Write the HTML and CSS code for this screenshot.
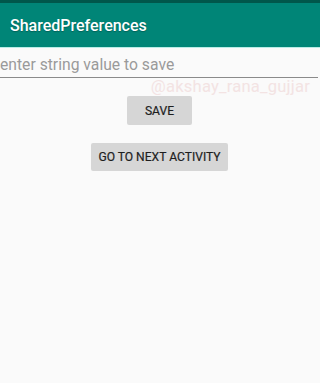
FILE: index.html
```html
<!DOCTYPE html>
<html>
<head>
<meta charset="utf-8">
<link rel="stylesheet" href="styles.css">
</head>
<body>
<div class="status"></div>
<div class="appbar"><span class="title">SharedPreferences</span></div>
<div class="content">
  <div class="field"><span class="hint">enter string value to save</span></div>
  <div class="watermark">@akshay_rana_gujjar</div>
  <div class="buttons">
    <div class="btn save">SAVE</div>
    <div class="btn next">GO TO NEXT ACTIVITY</div>
  </div>
</div>
</body>
</html>
```
FILE: styles.css
```css
html, body {
  margin: 0;
  padding: 0;
  background: #fafafa;
  font-family: Roboto, "Noto Sans", sans-serif;
  width: 320px;
  height: 383px;
  overflow: hidden;
}
.status {
  height: 3px;
  background: #00574b;
}
.appbar {
  height: 44px;
  background: #008577;
  border-bottom: 1px solid #b8ece6;
  display: flex;
  align-items: center;
  padding-left: 10px;
  box-sizing: content-box;
}
.title {
  color: #ffffff;
  font-size: 16px;
  font-weight: 500;
  text-shadow: 0 1px 1px rgba(0,0,0,0.25);
}
.content {
  position: relative;
}
.field {
  height: 25px;
  margin-right: 2px;
  border-bottom: 1px solid #8a8a8a;
  display: flex;
  align-items: center;
  padding-top: 4px;
  box-sizing: content-box;
}
.hint {
  color: #9a9a9a;
  font-size: 15.7px;
}
.watermark {
  position: absolute;
  top: 29px;
  right: 10px;
  font-size: 16.6px;
  color: #f3e3e3;
  letter-spacing: 0.2px;
}
.buttons {
  display: flex;
  flex-direction: column;
  align-items: center;
  padding-top: 18px;
  gap: 18px;
}
.btn {
  background: #d6d6d6;
  color: #1e1e1e;
  font-size: 12.1px;
  font-weight: 400;
  display: flex;
  align-items: center;
  justify-content: center;
  border-radius: 2px;
  -webkit-text-stroke: 0.2px #1e1e1e;
}
.save {
  width: 65px;
  height: 29px;
  margin-left: -1px;
}
.next {
  width: 137px;
  height: 28px;
  margin-left: -1px;
}
```
